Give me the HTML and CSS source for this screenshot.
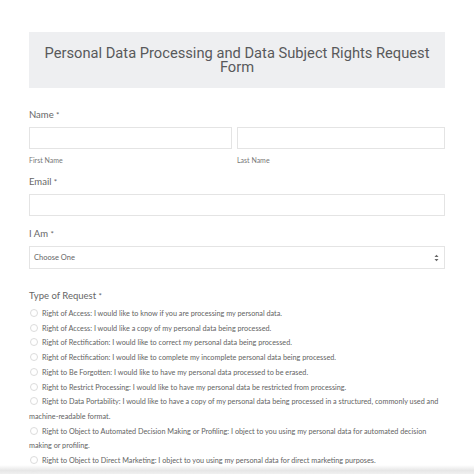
FILE: index.html
```html
<!DOCTYPE html>
<html lang="en">
<head>
  <meta charset="UTF-8">
  <title>Personal Data Processing and Data Subject Rights Request Form</title>
  <link rel="stylesheet" href="styles.css">
</head>
<body>
  <div class="form">
    <div class="form-header">
      <h1>Personal Data Processing and Data Subject Rights Request Form</h1>
    </div>

    <div class="field">
      <label class="label">Name <span class="req">*</span></label>
      <div class="name-row">
        <div class="sub">
          <div class="input"></div>
          <div class="sublabel">First Name</div>
        </div>
        <div class="sub">
          <div class="input"></div>
          <div class="sublabel">Last Name</div>
        </div>
      </div>
    </div>

    <div class="field email">
      <label class="label">Email <span class="req">*</span></label>
      <div class="input"></div>
    </div>

    <div class="field iam">
      <label class="label">I Am <span class="req">*</span></label>
      <div class="input select">
        <span>Choose One</span>
        <svg class="arrows" width="5" height="8" viewBox="0 0 5 8">
          <path d="M0.5 3 L2.5 0.8 L4.5 3 Z" fill="#666"/>
          <path d="M0.5 5 L2.5 7.2 L4.5 5 Z" fill="#666"/>
        </svg>
      </div>
    </div>

    <div class="field types">
      <label class="label">Type of Request <span class="req">*</span></label>
      <ul class="options">
        <li><span class="radio"></span>Right of Access: I would like to know if you are processing my personal data.</li>
        <li><span class="radio"></span>Right of Access: I would like a copy of my personal data being processed.</li>
        <li><span class="radio"></span>Right of Rectification: I would like to correct my personal data being processed.</li>
        <li><span class="radio"></span>Right of Rectification: I would like to complete my incomplete personal data being processed.</li>
        <li><span class="radio"></span>Right to Be Forgotten: I would like to have my personal data processed to be erased.</li>
        <li><span class="radio"></span>Right to Restrict Processing: I would like to have my personal data be restricted from processing.</li>
        <li><span class="radio"></span>Right to Data Portability: I would like to have a copy of my personal data being processed in a structured, commonly used and machine-readable format.</li>
        <li><span class="radio"></span>Right to Object to Automated Decision Making or Profiling: I object to you using my personal data for automated decision making or profiling.</li>
        <li><span class="radio"></span>Right to Object to Direct Marketing: I object to you using my personal data for direct marketing purposes.</li>
        <li><span class="radio"></span></li>
      </ul>
    </div>
  </div>
  <div class="fade"></div>
</body>
</html>
```

FILE: styles.css
```css
html, body {
  margin: 0;
  padding: 0;
  background: #fff;
  height: 100%;
  overflow: hidden;
}
body {
  font-family: Lato, "Open Sans", sans-serif;
  color: #666;
  position: relative;
}
.form {
  padding: 32px 29px 0 29px;
}
.form-header {
  background: #eeeff1;
  height: 56px;
  display: flex;
  align-items: center;
  justify-content: center;
}
.form-header h1 {
  margin: 0;
  font-family: Roboto, sans-serif;
  font-weight: 400;
  font-size: 14.7px;
  line-height: 14px;
  color: #58595b;
  text-align: center;
  padding: 0 10px;
}
.field {
  margin-top: 21px;
}
.label {
  display: block;
  font-size: 9.5px;
  line-height: 12px;
  color: #666;
  margin-bottom: 6px;
}
.req {
  font-size: 8px;
}
.name-row {
  display: grid;
  grid-template-columns: 203px 1fr;
  gap: 5px;
}
.input {
  height: 22px;
  border: 1px solid #e4e4e4;
  box-sizing: border-box;
  background: #fff;
}
.sublabel {
  font-size: 7px;
  color: #777;
  margin-top: 7px;
  line-height: 8px;
}
.email {
  margin-top: 12px;
}
.iam {
  margin-top: 12px;
}
.select {
  height: 23px;
  display: flex;
  align-items: center;
  justify-content: space-between;
  padding: 0 5px 0 4px;
  font-size: 7.5px;
  color: #666;
}
.arrows {
  display: block;
}
.types {
  margin-top: 21px;
}
.types .label {
  margin-bottom: 5px;
}
.options {
  list-style: none;
  margin: 0;
  padding: 0;
  font-size: 7.25px;
  line-height: 14.7px;
  color: #636363;
}
.radio {
  display: inline-block;
  width: 6px;
  height: 6px;
  border: 1px solid #dcdcdc;
  border-radius: 50%;
  margin: 0 4px 0 1px;
  vertical-align: -1px;
}
.fade {
  position: absolute;
  left: 0;
  right: 0;
  bottom: 0;
  height: 9px;
  background: linear-gradient(to bottom, rgba(235,235,235,0), rgba(228,228,228,0.9) 60%, rgba(240,240,240,1));
}
```
